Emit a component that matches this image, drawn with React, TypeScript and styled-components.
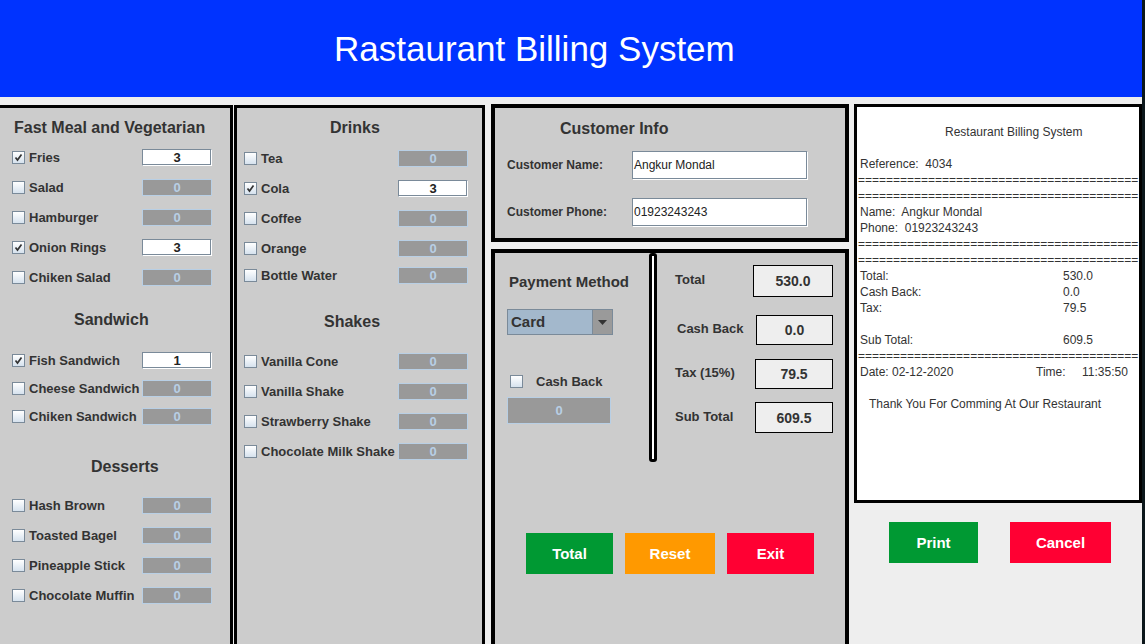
import styled, { createGlobalStyle } from 'styled-components';

const GlobalStyle = createGlobalStyle`
  html, body {
    margin: 0;
    padding: 0;
    width: 1145px;
    height: 644px;
    overflow: hidden;
    background: #eeeeee;
  }
  body {
    font-family: "Liberation Sans", Arial, sans-serif;
    color: #333333;
  }
  * {
    box-sizing: border-box;
  }
`;

const Screen = styled.div`
  display: flex;
  width: 1145px;
  height: 644px;
  overflow: hidden;
`;

const AppWindow = styled.div`
  width: 1142px;
  display: flex;
  flex-direction: column;
  background: #eeeeee;
`;

const DesktopEdge = styled.div`
  flex: 1;
  background: #0c171b;
`;

const Header = styled.header`
  height: 97px;
  flex-shrink: 0;
  background: #0033ff;
  display: flex;
  align-items: center;
  padding-left: 334px;
`;

const Title = styled.h1`
  margin: 0;
  font-size: 35px;
  font-weight: 400;
  line-height: 1;
  color: #ffffff;
`;

const Body = styled.div`
  display: flex;
  align-items: flex-start;
  padding-top: 7px;
`;

const MenuPanel = styled.section<{ $width: number; $gap: number; $noLeft?: boolean }>`
  width: ${(p) => p.$width}px;
  height: 560px;
  margin-top: 1px;
  margin-left: ${(p) => p.$gap}px;
  background: #cccccc;
  border: 3px solid #000000;
  border-left-width: ${(p) => (p.$noLeft ? 0 : 3)}px;
  display: flex;
  flex-direction: column;
`;

const SectionTitle = styled.h3<{ $indent: number; $mt: number }>`
  margin: ${(p) => p.$mt}px 0 0 0;
  padding-left: ${(p) => p.$indent}px;
  height: 20px;
  line-height: 20px;
  font-size: 16px;
  font-weight: 700;
  color: #333333;
  white-space: nowrap;
`;

const ItemList = styled.div<{ $mt: number; $pad: number; $end: number }>`
  margin-top: ${(p) => p.$mt}px;
  display: flex;
  flex-direction: column;
  padding-left: ${(p) => p.$pad}px;
  padding-right: ${(p) => p.$end}px;
`;

const ItemRow = styled.div<{ $h: number }>`
  height: ${(p) => p.$h}px;
  display: flex;
  align-items: center;
`;

const ItemLabel = styled.span`
  flex: 1;
  margin-left: 4px;
  font-size: 13px;
  font-weight: 700;
  color: #333333;
  white-space: nowrap;
`;

const Box = styled.span`
  width: 13px;
  height: 13px;
  flex-shrink: 0;
  border: 1px solid #7a8a99;
  background: linear-gradient(#ffffff, #d6e2ee);
  display: inline-flex;
  align-items: center;
  justify-content: center;
`;

const QtyField = styled.div<{ $active: boolean }>`
  width: 70px;
  height: 17px;
  flex-shrink: 0;
  font-size: 13px;
  font-weight: 700;
  line-height: 15px;
  text-align: center;
  background: ${(p) => (p.$active ? '#ffffff' : '#999999')};
  color: ${(p) => (p.$active ? '#222222' : '#b8cfe5')};
  border: 1px solid ${(p) => (p.$active ? '#7a8a99' : '#b8cfe5')};
  border-right-color: ${(p) => (p.$active ? '#ffffff' : '#b8cfe5')};
  border-bottom-color: ${(p) => (p.$active ? '#ffffff' : '#b8cfe5')};
  box-shadow: ${(p) => (p.$active ? 'inset -1px -1px 0 #7a8a99' : 'none')};
`;

const MiddleColumn = styled.div`
  width: 358px;
  margin-left: 6px;
  display: flex;
  flex-direction: column;
  gap: 7px;
`;

const CustomerBox = styled.section`
  height: 138px;
  background: #cccccc;
  border: 4px solid #000000;
  padding: 11px 0 0 12px;
`;

const CustomerTitle = styled.h3`
  margin: 0 0 12px 53px;
  height: 20px;
  line-height: 20px;
  font-size: 16px;
  font-weight: 700;
  color: #333333;
`;

const FormRows = styled.div`
  display: flex;
  flex-direction: column;
  gap: 19px;
`;

const FormRow = styled.div`
  display: flex;
  align-items: center;
  height: 28px;
`;

const FormLabel = styled.span`
  width: 125px;
  font-size: 12px;
  font-weight: 700;
  color: #333333;
`;

const TextInput = styled.div`
  width: 175px;
  height: 28px;
  background: #ffffff;
  border: 1px solid #7a8a99;
  box-shadow: 1px 1px 0 #ffffff;
  padding-left: 1px;
  display: flex;
  align-items: center;
  font-size: 12px;
  color: #222222;
`;

const PaymentBox = styled.section`
  height: 420px;
  background: #cccccc;
  border: 4px solid #000000;
  display: flex;
  flex-direction: column;
`;

const PaymentTop = styled.div`
  display: flex;
  height: 209px;
`;

const MethodColumn = styled.div`
  width: 154px;
  padding: 19px 0 0 12px;
  display: flex;
  flex-direction: column;
`;

const MethodTitle = styled.span`
  height: 20px;
  line-height: 20px;
  padding-left: 2px;
  font-size: 15px;
  font-weight: 700;
  color: #333333;
`;

const Combo = styled.div`
  margin-top: 17px;
  width: 106px;
  height: 26px;
  display: flex;
  border: 1px solid #7a8a99;
  background: #a3b8cc;
`;

const ComboText = styled.span`
  flex: 1;
  padding-left: 3px;
  line-height: 24px;
  font-size: 15px;
  font-weight: 700;
  color: #333333;
`;

const ComboArrow = styled.span`
  width: 20px;
  background: #9a9a9a;
  border-left: 1px solid #7a8a99;
  display: flex;
  align-items: center;
  justify-content: center;
`;

const CashBackToggle = styled.div`
  margin-top: 36px;
  height: 20px;
  display: flex;
  align-items: center;
  padding-left: 3px;
  gap: 13px;
  font-size: 13px;
  font-weight: 700;
  color: #333333;
`;

const CashBackField = styled.div`
  margin-top: 6px;
  width: 104px;
  height: 27px;
  background: #999999;
  border: 1px solid #b8cfe5;
  color: #b8cfe5;
  font-size: 13px;
  font-weight: 700;
  text-align: center;
  line-height: 25px;
`;

const Divider = styled.div`
  width: 8px;
  height: 209px;
  border: 3px solid #000000;
  border-radius: 3px;
  background: #ffffff;
`;

const SummaryColumn = styled.div`
  flex: 1;
  padding: 12px 12px 0 18px;
  display: flex;
  flex-direction: column;
`;

const SummaryRow = styled.div<{ $mt: number }>`
  margin-top: ${(p) => p.$mt}px;
  display: flex;
  align-items: center;
  justify-content: space-between;
`;

const SummaryLabel = styled.span<{ $indent?: number }>`
  padding-left: ${(p) => p.$indent ?? 0}px;
  margin-top: -3px;
  font-size: 13px;
  font-weight: 700;
  color: #333333;
`;

const ValueBox = styled.div<{ $w: number; $h: number }>`
  width: ${(p) => p.$w}px;
  height: ${(p) => p.$h}px;
  background: #eeeeee;
  border: 1px solid #000000;
  display: flex;
  align-items: center;
  justify-content: center;
  font-size: 14px;
  font-weight: 700;
  color: #333333;
`;

const ButtonRow = styled.div<{ $mt: number; $pl: number; $gap: number }>`
  margin-top: ${(p) => p.$mt}px;
  padding-left: ${(p) => p.$pl}px;
  display: flex;
  gap: ${(p) => p.$gap}px;
`;

const ActionButton = styled.button<{ $bg: string; $w: number }>`
  width: ${(p) => p.$w}px;
  height: 41px;
  border: none;
  background: ${(p) => p.$bg};
  color: #ffffff;
  font-family: "Liberation Sans", Arial, sans-serif;
  font-size: 15px;
  font-weight: 700;
  padding: 0;
`;

const BillColumn = styled.div`
  width: 288px;
  margin-left: 5px;
  display: flex;
  flex-direction: column;
`;

const Receipt = styled.div`
  height: 399px;
  background: #ffffff;
  border: 3px solid #000000;
  padding-top: 1px;
  font-size: 12px;
  line-height: 16px;
  color: #333333;
`;

const ReceiptLine = styled.div<{ $indent?: number }>`
  height: 16px;
  padding-left: ${(p) => 3 + (p.$indent ?? 0)}px;
  white-space: pre;
  overflow: hidden;
`;

const ReceiptRule = styled.div`
  height: 16px;
  padding-left: 1px;
  white-space: pre;
  overflow: hidden;
`;

const ReceiptCols = styled.div<{ $cols: string }>`
  height: 16px;
  padding-left: 3px;
  display: grid;
  grid-template-columns: ${(p) => p.$cols};
  white-space: pre;
`;

const Check = ({ on }: { on: boolean }) => (
  <Box>
    {on && (
      <svg width="9" height="9" viewBox="0 0 9 9">
        <path d="M1.5 4.5 L3.5 7 L7.5 1.5" fill="none" stroke="#333" strokeWidth="1.7" />
      </svg>
    )}
  </Box>
);

type Item = { name: string; qty?: number; h?: number };

const ItemLines = ({ items, rowH }: { items: Item[]; rowH: number }) => (
  <>
    {items.map((it) => (
      <ItemRow key={it.name} $h={it.h ?? rowH}>
        <Check on={!!it.qty} />
        <ItemLabel>{it.name}</ItemLabel>
        <QtyField $active={!!it.qty}>{it.qty ?? 0}</QtyField>
      </ItemRow>
    ))}
  </>
);

const fastMeal: Item[] = [
  { name: 'Fries', qty: 3 },
  { name: 'Salad' },
  { name: 'Hamburger' },
  { name: 'Onion Rings', qty: 3 },
  { name: 'Chiken Salad' },
];
const sandwich: Item[] = [
  { name: 'Fish Sandwich', qty: 1 },
  { name: 'Cheese Sandwich' },
  { name: 'Chiken Sandwich' },
];
const desserts: Item[] = [
  { name: 'Hash Brown' },
  { name: 'Toasted Bagel' },
  { name: 'Pineapple Stick' },
  { name: 'Chocolate Muffin' },
];
const drinks: Item[] = [
  { name: 'Tea' },
  { name: 'Cola', qty: 3 },
  { name: 'Coffee' },
  { name: 'Orange' },
  { name: 'Bottle Water', h: 24 },
];
const shakes: Item[] = [
  { name: 'Vanilla Cone' },
  { name: 'Vanilla Shake' },
  { name: 'Strawberry Shake' },
  { name: 'Chocolate Milk Shake' },
];

const rule = '='.repeat(40);

export default function App() {
  return (
    <Screen>
      <GlobalStyle />
      <AppWindow>
        <Header>
          <Title>Rastaurant Billing System</Title>
        </Header>
        <Body>
          <MenuPanel $width={233} $gap={0} $noLeft>
            <SectionTitle $indent={14} $mt={10}>Fast Meal and Vegetarian</SectionTitle>
            <ItemList $mt={4} $pad={12} $end={18}>
              <ItemLines items={fastMeal} rowH={30} />
            </ItemList>
            <SectionTitle $indent={74} $mt={18}>Sandwich</SectionTitle>
            <ItemList $mt={16} $pad={12} $end={18}>
              <ItemLines items={sandwich} rowH={28} />
            </ItemList>
            <SectionTitle $indent={91} $mt={27}>Desserts</SectionTitle>
            <ItemList $mt={13} $pad={12} $end={18}>
              <ItemLines items={desserts} rowH={30} />
            </ItemList>
          </MenuPanel>

          <MenuPanel $width={251} $gap={1}>
            <SectionTitle $indent={93} $mt={10}>Drinks</SectionTitle>
            <ItemList $mt={5} $pad={7} $end={14}>
              <ItemLines items={drinks} rowH={30} />
            </ItemList>
            <SectionTitle $indent={87} $mt={25}>Shakes</SectionTitle>
            <ItemList $mt={14} $pad={7} $end={14}>
              <ItemLines items={shakes} rowH={30} />
            </ItemList>
          </MenuPanel>

          <MiddleColumn>
            <CustomerBox>
              <CustomerTitle>Customer Info</CustomerTitle>
              <FormRows>
                <FormRow>
                  <FormLabel>Customer Name:</FormLabel>
                  <TextInput>Angkur Mondal</TextInput>
                </FormRow>
                <FormRow>
                  <FormLabel>Customer Phone:</FormLabel>
                  <TextInput>01923243243</TextInput>
                </FormRow>
              </FormRows>
            </CustomerBox>

            <PaymentBox>
              <PaymentTop>
                <MethodColumn>
                  <MethodTitle>Payment Method</MethodTitle>
                  <Combo>
                    <ComboText>Card</ComboText>
                    <ComboArrow>
                      <svg width="9" height="5" viewBox="0 0 9 5">
                        <path d="M0 0 H9 L4.5 5 Z" fill="#333" />
                      </svg>
                    </ComboArrow>
                  </Combo>
                  <CashBackToggle>
                    <Check on={false} />
                    <span>Cash Back</span>
                  </CashBackToggle>
                  <CashBackField>0</CashBackField>
                </MethodColumn>
                <Divider />
                <SummaryColumn>
                  <SummaryRow $mt={0}>
                    <SummaryLabel>Total</SummaryLabel>
                    <ValueBox $w={80} $h={32}>530.0</ValueBox>
                  </SummaryRow>
                  <SummaryRow $mt={18}>
                    <SummaryLabel $indent={2}>Cash Back</SummaryLabel>
                    <ValueBox $w={77} $h={30}>0.0</ValueBox>
                  </SummaryRow>
                  <SummaryRow $mt={14}>
                    <SummaryLabel>Tax (15%)</SummaryLabel>
                    <ValueBox $w={78} $h={30}>79.5</ValueBox>
                  </SummaryRow>
                  <SummaryRow $mt={13}>
                    <SummaryLabel>Sub Total</SummaryLabel>
                    <ValueBox $w={78} $h={31}>609.5</ValueBox>
                  </SummaryRow>
                </SummaryColumn>
              </PaymentTop>
              <ButtonRow $mt={71} $pl={31} $gap={12}>
                <ActionButton $bg="#009933" $w={87}>Total</ActionButton>
                <ActionButton $bg="#ff9900" $w={90}>Reset</ActionButton>
                <ActionButton $bg="#ff0033" $w={87}>Exit</ActionButton>
              </ButtonRow>
            </PaymentBox>
          </MiddleColumn>

          <BillColumn>
            <Receipt>
              <ReceiptLine> </ReceiptLine>
              <ReceiptLine $indent={85}>Restaurant Billing System</ReceiptLine>
              <ReceiptLine> </ReceiptLine>
              <ReceiptLine>Reference:  4034</ReceiptLine>
              <ReceiptRule>{rule}</ReceiptRule>
              <ReceiptRule>{rule}</ReceiptRule>
              <ReceiptLine>Name:  Angkur Mondal</ReceiptLine>
              <ReceiptLine>Phone:  01923243243</ReceiptLine>
              <ReceiptRule>{rule}</ReceiptRule>
              <ReceiptRule>{rule}</ReceiptRule>
              <ReceiptCols $cols="203px auto">
                <span>Total:</span>
                <span>530.0</span>
              </ReceiptCols>
              <ReceiptCols $cols="203px auto">
                <span>Cash Back:</span>
                <span>0.0</span>
              </ReceiptCols>
              <ReceiptCols $cols="203px auto">
                <span>Tax:</span>
                <span>79.5</span>
              </ReceiptCols>
              <ReceiptLine> </ReceiptLine>
              <ReceiptCols $cols="203px auto">
                <span>Sub Total:</span>
                <span>609.5</span>
              </ReceiptCols>
              <ReceiptRule>{rule}</ReceiptRule>
              <ReceiptCols $cols="176px 46px auto">
                <span>Date: 02-12-2020</span>
                <span>Time:</span>
                <span>11:35:50</span>
              </ReceiptCols>
              <ReceiptLine> </ReceiptLine>
              <ReceiptLine $indent={9}>Thank You For Comming At Our Restaurant</ReceiptLine>
            </Receipt>
            <ButtonRow $mt={19} $pl={35} $gap={32}>
              <ActionButton $bg="#009933" $w={89}>Print</ActionButton>
              <ActionButton $bg="#ff0033" $w={101}>Cancel</ActionButton>
            </ButtonRow>
          </BillColumn>
        </Body>
      </AppWindow>
      <DesktopEdge />
    </Screen>
  );
}
